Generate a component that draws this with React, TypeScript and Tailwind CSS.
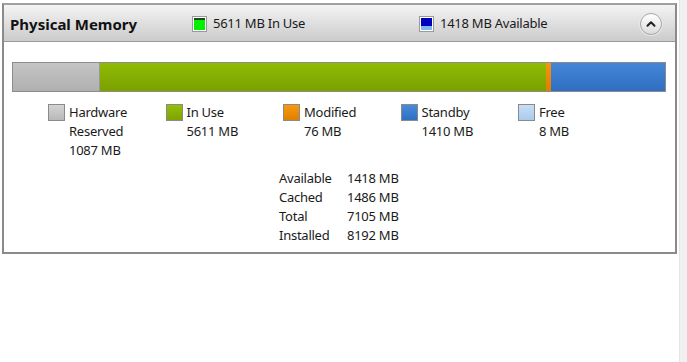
import { ChevronUp } from "lucide-react";

const legend = [
  { swatch: "bg-gradient-to-b from-[#d4d4d4] to-[#b8b8b8]", lines: ["Hardware", "Reserved", "1087 MB"] },
  { swatch: "bg-gradient-to-b from-[#94bf0a] to-[#7ea300]", lines: ["In Use", "5611 MB"] },
  { swatch: "bg-gradient-to-b from-[#f79a10] to-[#e07f00]", lines: ["Modified", "76 MB"] },
  { swatch: "bg-gradient-to-b from-[#4a8ad8] to-[#2f6fc4]", lines: ["Standby", "1410 MB"] },
  { swatch: "bg-gradient-to-b from-[#c8def4] to-[#a9cbec]", lines: ["Free", "8 MB"] },
];

const stats = [
  ["Available", "1418 MB"],
  ["Cached", "1486 MB"],
  ["Total", "7105 MB"],
  ["Installed", "8192 MB"],
];

function InUseIcon() {
  return (
    <div className="flex h-[16px] w-[15px] flex-col border border-[#9a9a9a] bg-white p-px">
      <div className="h-[2px] bg-[#1a4a1a]" />
      <div className="flex-1 bg-[#00f000]" />
    </div>
  );
}

function AvailableIcon() {
  return (
    <div className="flex h-[16px] w-[15px] flex-col border border-[#9a9a9a] bg-white p-px">
      <div className="flex-1 bg-[#0000c8] bg-[radial-gradient(circle,#000070_0.8px,transparent_1px)] bg-[length:3px_3px]" />
      <div className="h-[4px] bg-[#7fb8f0]" />
    </div>
  );
}

export default function App() {
  return (
    <div
      className="flex h-[362px] w-[687px] overflow-hidden bg-white text-[13px] tracking-[-0.25px] text-[#1a1a1a]"
      style={{ fontFamily: '"Noto Sans", "Open Sans", sans-serif' }}
    >
      <div className="flex-1 pl-[2px] pt-[3px]">
        <div className="h-[251px] w-[675px] border-2 border-[#8a8a8a] border-t-[#a0a0a0]">
          <div className="flex h-[37px] items-center border-b border-[#9a9a9a] bg-gradient-to-b from-[#f4f4f4] to-[#cbcbcb] pl-[6px] pr-[13px] pt-[2px]">
            <div className="w-[182px] text-[15px] font-bold tracking-normal text-[#111]">Physical Memory</div>
            <div className="flex w-[227px] items-center gap-[6px]">
              <InUseIcon />
              <span>5611 MB In Use</span>
            </div>
            <div className="flex items-center gap-[6px]">
              <AvailableIcon />
              <span>1418 MB Available</span>
            </div>
            <div className="ml-auto flex h-[22px] w-[22px] items-center justify-center rounded-full border border-[#a8a8a8] bg-gradient-to-b from-white to-[#dcdcdc] shadow-[0_0_0_1px_#e8e8e8]">
              <ChevronUp size={14} strokeWidth={3.5} className="text-[#222]" />
            </div>
          </div>

          <div className="px-[8px] pt-[20px]">
            <div className="flex h-[30px] w-[654px] border border-[#8c8c8c]">
              <div className="w-[86px] bg-gradient-to-b from-[#c4c4c4] to-[#b0b0b0]" />
              <div className="w-[447px] border-l border-[#9a9a9a] bg-gradient-to-b from-[#8fbb06] to-[#7ba000]" />
              <div className="w-[5px] bg-gradient-to-b from-[#f59410] to-[#e07e00]" />
              <div className="flex-1 bg-gradient-to-b from-[#4486d6] to-[#2f6ec2]" />
            </div>
          </div>

          <div className="flex pl-[44px] pt-[11px]">
            {legend.map((item) => (
              <div key={item.lines[0]} className="flex w-[117.5px] gap-[4px]">
                <div className={`mt-[1px] h-[17px] w-[17px] border border-[#8a8a8a] ${item.swatch}`} />
                <div className="leading-[19px]">
                  {item.lines.map((l) => (
                    <div key={l}>{l}</div>
                  ))}
                </div>
              </div>
            ))}
          </div>

          <div className="pl-[275px] pt-[9px] leading-[19px]">
            {stats.map(([k, v]) => (
              <div key={k} className="flex">
                <div className="w-[68px]">{k}</div>
                <div>{v}</div>
              </div>
            ))}
          </div>
        </div>
      </div>
      <div className="w-[8px] border-l border-[#e4e4e4] bg-[#f0f0f0]" />
    </div>
  );
}
